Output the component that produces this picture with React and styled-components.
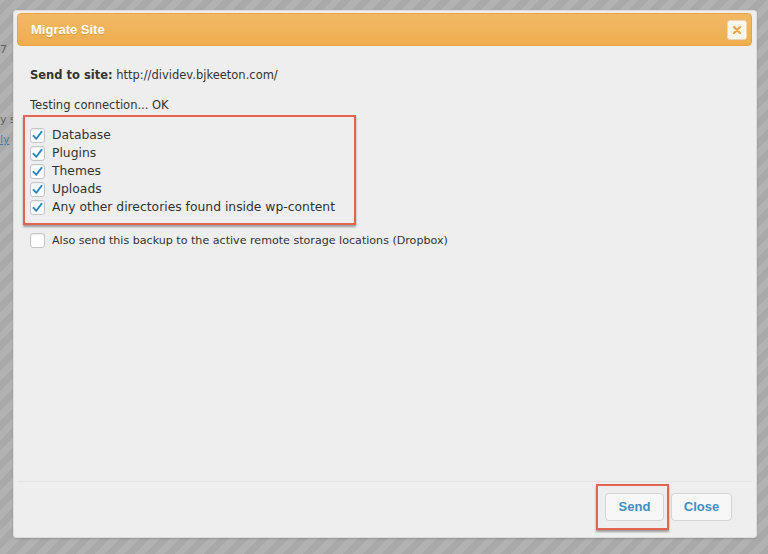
import styled, { createGlobalStyle } from "styled-components";

const GlobalStyle = createGlobalStyle`
  html, body {
    margin: 0;
    padding: 0;
    height: 100%;
  }
  body {
    font-family: "DejaVu Sans", "Liberation Sans", sans-serif;
    overflow: hidden;
  }
`;

const Overlay = styled.div`
  position: relative;
  width: 768px;
  height: 554px;
  box-sizing: border-box;
  padding: 10px 11px 16px 13px;
  background: repeating-linear-gradient(
    -45deg,
    #a9a9a9 0px,
    #a9a9a9 7px,
    #b2b2b2 7px,
    #b2b2b2 14px
  );
  display: flex;
`;

const BehindText = styled.div`
  position: absolute;
  left: 0;
  top: 43px;
  display: flex;
  flex-direction: column;
  font-size: 11px;
  line-height: 14px;
  color: #4a4a4a;
  opacity: 0.75;
`;

const BehindLine = styled.span`
  margin-top: ${(p) => p.$top || 0}px;
  color: ${(p) => (p.$link ? "#2a6fa8" : "inherit")};
  text-decoration: ${(p) => (p.$link ? "underline" : "none")};
`;

const Dialog = styled.div`
  position: relative;
  flex: 1;
  display: flex;
  flex-direction: column;
  background: #eeeeee;
  border: 1px solid #dcdcdc;
  border-radius: 3px;
  box-shadow: 0 1px 2px rgba(0, 0, 0, 0.15);
  padding: 2px 4px 0 3px;
`;

const TitleBar = styled.div`
  height: 31px;
  display: flex;
  align-items: center;
  justify-content: space-between;
  padding: 0 4px 0 13px;
  background: linear-gradient(#f2b865, #eeae4f);
  border: 1px solid #e7a445;
  border-radius: 4px;
`;

const Title = styled.span`
  color: #fff;
  font-family: "Liberation Sans", Arial, sans-serif;
  font-weight: bold;
  font-size: 13px;
  text-shadow: 0 1px 0 rgba(160, 100, 20, 0.3);
`;

const CloseX = styled.button`
  width: 20px;
  height: 20px;
  padding: 0;
  display: flex;
  align-items: center;
  justify-content: center;
  background: #fbf7f0;
  border: 1px solid #f0d6ae;
  border-radius: 3px;
`;

const Content = styled.div`
  flex: 1;
  padding: 20px 13px 0 13px;
  font-size: 11.5px;
  color: #333;
`;

const Line = styled.p`
  margin: 0 0 ${(p) => p.$gap || 0}px 0;
  line-height: 18px;
`;

const Highlight = styled.div`
  margin: 1px 0 0 -7px;
  width: 333px;
  box-sizing: border-box;
  border: 2px solid #e56450;
  box-shadow: 0 2px 2px rgba(0, 0, 0, 0.35);
  padding: 9px 5px 7px 5px;
  font-size: 12.35px;
`;

const CheckRow = styled.label`
  display: flex;
  align-items: center;
  gap: 7px;
  height: 18px;
  margin-top: ${(p) => p.$top || 0}px;
  font-size: ${(p) => p.$size || "inherit"};
`;

const Box = styled.span`
  width: 15px;
  height: 15px;
  box-sizing: border-box;
  flex-shrink: 0;
  background: #fff;
  border: 1px solid #c2c5c8;
  border-radius: 3px;
  box-shadow: inset 0 1px 2px rgba(0, 0, 0, 0.08);
  display: flex;
  align-items: center;
  justify-content: center;
`;

const Footer = styled.div`
  border-top: 1px solid #e2e2e2;
  height: 49px;
  margin-bottom: 6px;
  display: flex;
  align-items: center;
  justify-content: flex-end;
  padding: 0 20px 0 0;
`;

const SendHighlight = styled.div`
  border: 2px solid #e56450;
  box-shadow: 0 2px 2px rgba(0, 0, 0, 0.35);
  padding: 7px 3px 7px 7px;
  margin-right: 2px;
  display: flex;
`;

const Button = styled.button`
  height: 28px;
  width: ${(p) => p.$w}px;
  background: #f7f7f7;
  border: 1px solid #d4d4d4;
  border-radius: 4px;
  color: #3d8fc6;
  font-family: "Liberation Sans", Arial, sans-serif;
  font-weight: bold;
  font-size: 13px;
  padding: 0;
`;

const Check = () => (
  <svg width="13" height="13" viewBox="0 0 16 16">
    <path
      d="M3 8.5 L6.5 12 L13 3.5"
      fill="none"
      stroke="#2b8ac4"
      strokeWidth="2.4"
      strokeLinecap="round"
      strokeLinejoin="round"
    />
  </svg>
);

const items = [
  "Database",
  "Plugins",
  "Themes",
  "Uploads",
  "Any other directories found inside wp-content",
];

export default function App() {
  return (
    <>
      <GlobalStyle />
      <Overlay>
        <BehindText>
          <BehindLine>7</BehindLine>
          <BehindLine $top={56}>y s</BehindLine>
          <BehindLine $top={6} $link>
            ly
          </BehindLine>
        </BehindText>
        <Dialog>
          <TitleBar>
            <Title>Migrate Site</Title>
            <CloseX aria-label="close">
              <svg width="10" height="10" viewBox="0 0 10 10">
                <path
                  d="M2 2 L8 8 M8 2 L2 8"
                  stroke="#eea843"
                  strokeWidth="2.4"
                  strokeLinecap="round"
                />
              </svg>
            </CloseX>
          </TitleBar>
          <Content>
            <Line $gap={12}>
              <b>Send to site:</b> http://dividev.bjkeeton.com/
            </Line>
            <Line>Testing connection... OK</Line>
            <Highlight>
              {items.map((t) => (
                <CheckRow key={t}>
                  <Box>
                    <Check />
                  </Box>
                  {t}
                </CheckRow>
              ))}
            </Highlight>
            <CheckRow $top={6} $size="11.1px">
              <Box />
              Also send this backup to the active remote storage locations
              (Dropbox)
            </CheckRow>
          </Content>
          <Footer>
            <SendHighlight>
              <Button $w={59}>Send</Button>
            </SendHighlight>
            <Button $w={61}>Close</Button>
          </Footer>
        </Dialog>
      </Overlay>
    </>
  );
}
